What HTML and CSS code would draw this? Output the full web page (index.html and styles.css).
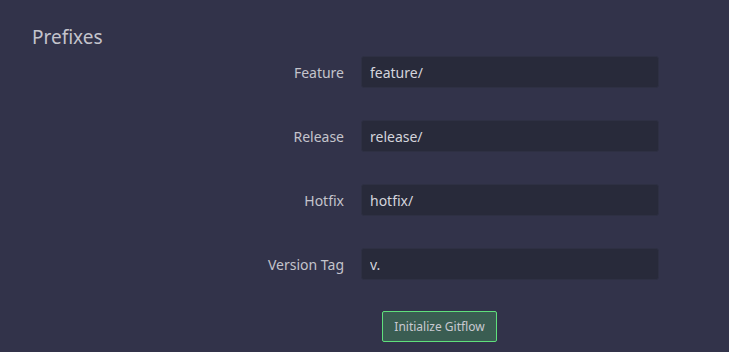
FILE: index.html
```html
<!DOCTYPE html>
<html lang="en">
<head>
    <meta charset="UTF-8">
    <meta name="viewport" content="width=device-width, initial-scale=1.0">
    <title>Gitflow - Prefixes</title>
    <link rel="stylesheet" href="styles.css">
</head>
<body>
<div class="section">
    <h2>Prefixes</h2>

    <!-- Prefijos de ramas -->
    <div class="prefix-form">
        <label for="feature">Feature</label>
        <input type="text" id="feature" value="feature/">

        <label for="release">Release</label>
        <input type="text" id="release" value="release/">

        <label for="hotfix">Hotfix</label>
        <input type="text" id="hotfix" value="hotfix/">

        <label for="version-tag">Version Tag</label>
        <input type="text" id="version-tag" value="v.">

        <div class="actions">
            <button>Initialize Gitflow</button>
        </div>
    </div>
</div>
</body>
</html>
```

FILE: styles.css
```css
body {
    font-family: 'Noto Sans', 'Open Sans', sans-serif;
    background-color: #32334a;
    margin: 0;
    color: #c9c9d1;
}

.section {
    padding: 24px 0 0 32px;
}

h2 {
    font-size: 19px;
    font-weight: normal;
    color: #c4c4cc;
    margin: 0 0 6px 0;
    line-height: 26px;
}

.prefix-form {
    display: grid;
    grid-template-columns: 312px 298px;
    column-gap: 17px;
    row-gap: 32px;
    align-items: center;
}

.prefix-form label {
    text-align: right;
    font-size: 14px;
    color: #c4c4cc;
}

.prefix-form input[type="text"] {
    box-sizing: border-box;
    height: 32px;
    padding: 0 8px;
    background-color: #282a3a;
    border: 1px solid #2e3043;
    border-radius: 3px;
    color: #d4d4dc;
    font-family: 'Noto Sans', 'Open Sans', sans-serif;
    font-size: 14px;
    outline: none;
}

.actions {
    grid-column: 2;
    margin-top: -1px;
    padding-left: 21px;
}

button {
    font-family: 'Noto Sans', 'Open Sans', sans-serif;
    font-size: 12px;
    height: 31px;
    width: 115px;
    background-color: #3a5d52;
    border: 1px solid #5fe07c;
    border-radius: 2px;
    color: #c9c9d1;
    cursor: pointer;
}

button:hover {
    background-color: #426a5d;
}
```
